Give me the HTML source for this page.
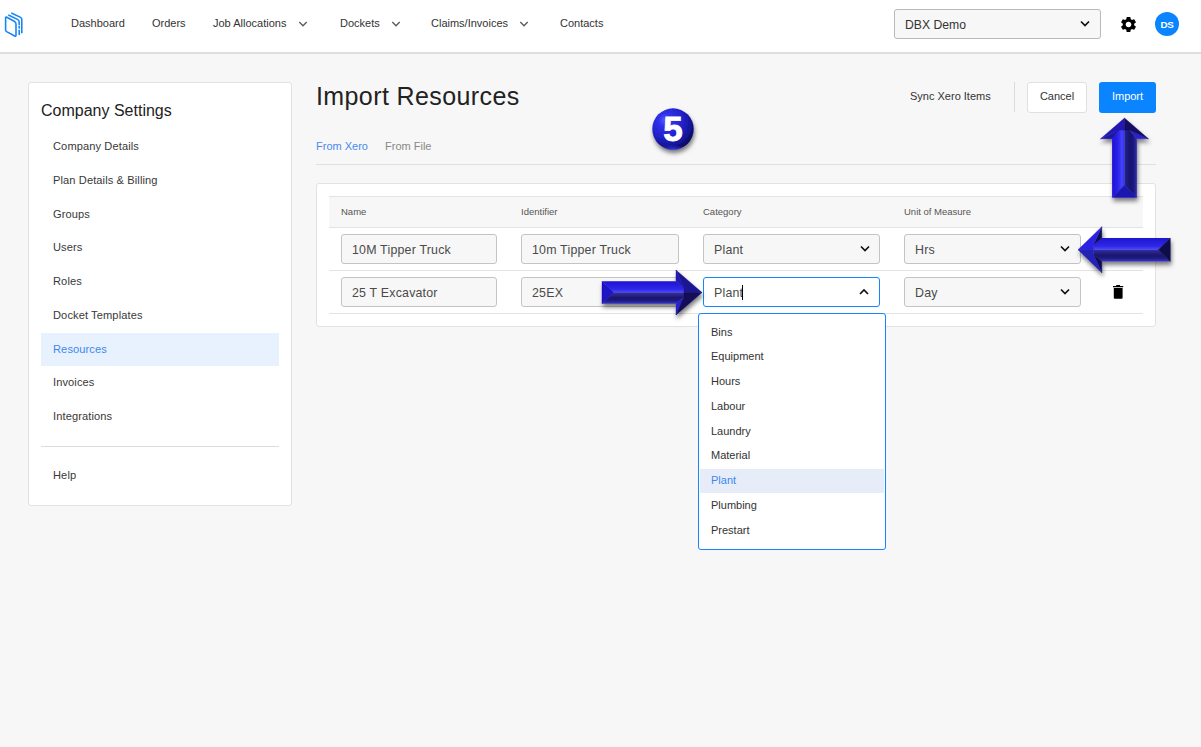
<!DOCTYPE html>
<html><head><meta charset="utf-8">
<style>
*{box-sizing:border-box;margin:0;padding:0}
html,body{width:1201px;height:747px;overflow:hidden}
body{background:#f7f7f7;font-family:"Liberation Sans",sans-serif;color:#333;position:relative}
.abs{position:absolute}
.hdr{position:absolute;left:0;top:0;width:1201px;height:54px;background:#fff;border-bottom:2px solid #dedede}
.nav{position:absolute;top:16px;font-size:11px;color:#333;white-space:nowrap;line-height:14px}
.chev{position:absolute}
.org{position:absolute;left:894px;top:9px;width:207px;height:30px;background:#f7f7f7;border:1px solid #b9b9b9;border-radius:3px}
.card{position:absolute;background:#fff;border:1px solid #e2e2e2;border-radius:3px}
.side{position:absolute;left:53px;font-size:11.1px;letter-spacing:0.1px;color:#383838;white-space:nowrap;line-height:14px}
.inp{position:absolute;height:30px;background:#f7f7f7;border:1px solid #c4c4c4;border-radius:3px;font-size:12.4px;letter-spacing:0.2px;color:#4a4a4a;line-height:29px;padding-top:1px;padding-left:10px;white-space:nowrap}
.th{position:absolute;top:206px;font-size:9.5px;color:#555;line-height:12px}
.dd{position:absolute;font-size:11px;color:#333;left:711px;line-height:14px}
</style></head><body>
<div class="hdr"></div>
<!-- logo -->
<svg class="abs" style="left:2px;top:10px" width="24" height="30" viewBox="0 0 24 30">
 <g fill="none" stroke="#1786f5" stroke-width="1.6" stroke-linejoin="round" stroke-linecap="round">
  <path d="M3.6 8 Q3.6 6.8 4.8 7.3 L12.2 11.2 Q14 12.2 14 14 L14 25.2 Q14 26.6 12.7 26 L4.6 21.6 Q3.6 21 3.6 20 Z"/>
  <path d="M6.9 5.2 L15.4 9.4 Q17.2 10.4 17.2 12 L17.2 14.4"/>
  <path d="M17.2 16.4 L17.2 18"/>
  <path d="M17.2 20.3 L17.2 24.4"/>
  <path d="M9.9 3.2 L18.6 7.4 Q19.8 8.1 19.8 9.6 L19.8 22.8"/>
 </g>
</svg>
<div class="nav" style="left:71px">Dashboard</div>
<div class="nav" style="left:152px">Orders</div>
<div class="nav" style="left:213px">Job Allocations</div>
<div class="nav" style="left:340px">Dockets</div>
<div class="nav" style="left:431px">Claims/Invoices</div>
<div class="nav" style="left:560px">Contacts</div>
<svg class="chev" style="left:298px;top:21px" width="10" height="7" viewBox="0 0 10 7"><path d="M1.3 1 L5 4.8 L8.7 1" fill="none" stroke="#5a5a5a" stroke-width="1.3"/></svg>
<svg class="chev" style="left:390.5px;top:21px" width="10" height="7" viewBox="0 0 10 7"><path d="M1.3 1 L5 4.8 L8.7 1" fill="none" stroke="#5a5a5a" stroke-width="1.3"/></svg>
<svg class="chev" style="left:518.5px;top:21.3px" width="10" height="7" viewBox="0 0 10 7"><path d="M1.3 1 L5 4.8 L8.7 1" fill="none" stroke="#5a5a5a" stroke-width="1.3"/></svg>

<div class="org"></div>
<div class="abs" style="left:905px;top:18px;font-size:12.2px;color:#333;line-height:15px">DBX Demo</div>
<svg class="abs" style="left:1080px;top:20px" width="10" height="8" viewBox="0 0 10 8"><path d="M1 1.5 L5 5.5 L9 1.5" fill="none" stroke="#111" stroke-width="1.7"/></svg>
<!-- gear -->
<svg class="abs" style="left:1118.6px;top:14.6px" width="19" height="19" viewBox="0 0 24 24"><path fill="#000" d="M19.14 12.94c.04-.3.06-.61.06-.94 0-.32-.02-.64-.07-.94l2.03-1.58a.49.49 0 0 0 .12-.61l-1.92-3.32a.488.488 0 0 0-.59-.22l-2.39.96c-.5-.38-1.03-.7-1.62-.94l-.36-2.54a.484.484 0 0 0-.48-.41h-3.84c-.24 0-.43.17-.47.41l-.36 2.54c-.59.24-1.13.57-1.62.94l-2.39-.96c-.22-.08-.47 0-.59.22L2.74 8.87c-.12.21-.08.47.12.61l2.03 1.58c-.05.3-.09.63-.09.94s.02.64.07.94l-2.03 1.58a.49.49 0 0 0-.12.61l1.92 3.32c.12.22.37.29.59.22l2.39-.96c.5.38 1.03.7 1.62.94l.36 2.54c.05.24.24.41.48.41h3.84c.24 0 .44-.17.47-.41l.36-2.54c.59-.24 1.13-.56 1.62-.94l2.39.96c.22.08.47 0 .59-.22l1.92-3.32c.12-.22.07-.47-.12-.61l-2.01-1.58zM12 15.6c-1.98 0-3.6-1.62-3.6-3.6s1.62-3.6 3.6-3.6 3.6 1.62 3.6 3.6-1.62 3.6-3.6 3.6z"/></svg>
<div class="abs" style="left:1155px;top:12px;width:24px;height:24px;border-radius:50%;background:#0a84ff;color:#fff;font-weight:bold;font-size:9.8px;letter-spacing:-0.2px;line-height:26px;text-align:center">DS</div>

<!-- sidebar -->
<div class="card" style="left:28px;top:82px;width:264px;height:424px"></div>
<div class="abs" style="left:41px;top:102px;font-size:16px;color:#222;line-height:18px">Company Settings</div>
<div class="abs" style="left:41px;top:333px;width:238px;height:33px;background:#e8f2fe"></div>
<div class="side" style="top:139px">Company Details</div>
<div class="side" style="top:173px">Plan Details &amp; Billing</div>
<div class="side" style="top:207px">Groups</div>
<div class="side" style="top:240px">Users</div>
<div class="side" style="top:274px">Roles</div>
<div class="side" style="top:308px">Docket Templates</div>
<div class="side" style="top:342px;color:#3d88f0">Resources</div>
<div class="side" style="top:375px">Invoices</div>
<div class="side" style="top:409px">Integrations</div>
<div class="abs" style="left:41px;top:446px;width:238px;height:1px;background:#dcdcdc"></div>
<div class="side" style="top:468px">Help</div>

<!-- main -->
<div class="abs" style="left:316px;top:83px;font-size:25px;letter-spacing:0.4px;color:#222;line-height:26px">Import Resources</div>
<div class="abs" style="left:316px;top:139px;font-size:11px;color:#4a8af0;line-height:14px">From Xero</div>
<div class="abs" style="left:385px;top:139px;font-size:11px;color:#888;line-height:14px">From File</div>
<div class="abs" style="left:316px;top:164px;width:840px;height:1px;background:#e0e0e0"></div>

<div class="abs" style="left:910px;top:89px;font-size:11px;color:#333;line-height:14px">Sync Xero Items</div>
<div class="abs" style="left:1014px;top:82px;width:1px;height:30px;background:#dcdcdc"></div>
<div class="abs" style="left:1027px;top:82px;width:60px;height:31px;background:#fff;border:1px solid #e0e0e0;border-radius:3px;font-size:11px;color:#333;line-height:27px;text-align:center">Cancel</div>
<div class="abs" style="left:1099px;top:82px;width:57px;height:31px;background:#0a84ff;border-radius:3px;font-size:11px;color:#fff;line-height:29px;text-align:center">Import</div>

<!-- table card -->
<div class="card" style="left:316px;top:183px;width:840px;height:144px"></div>
<div class="abs" style="left:329px;top:196px;width:814px;height:32px;background:#f7f7f7;border-top:1px solid #e3e3e3;border-bottom:1px solid #e3e3e3"></div>
<div class="abs" style="left:329px;top:270px;width:814px;height:1px;background:#e3e3e3"></div>
<div class="abs" style="left:329px;top:313px;width:814px;height:1px;background:#e3e3e3"></div>
<div class="th" style="left:341px">Name</div>
<div class="th" style="left:521px">Identifier</div>
<div class="th" style="left:703px">Category</div>
<div class="th" style="left:904px">Unit of Measure</div>

<div class="inp" style="left:341px;top:234px;width:156px">10M Tipper Truck</div>
<div class="inp" style="left:521px;top:234px;width:158px">10m Tipper Truck</div>
<div class="inp" style="left:703px;top:234px;width:177px">Plant</div>
<div class="inp" style="left:904px;top:234px;width:177px">Hrs</div>
<div class="inp" style="left:341px;top:277px;width:156px">25 T Excavator</div>
<div class="inp" style="left:521px;top:277px;width:158px">25EX</div>
<div class="inp" style="left:703px;top:277px;width:177px;background:#fff;border:1.4px solid #1486ff;line-height:27px;padding-top:2px">Plant</div>
<div class="abs" style="left:742px;top:285px;width:1px;height:15px;background:#000"></div>
<div class="inp" style="left:904px;top:277px;width:177px">Day</div>
<svg class="abs" style="left:860px;top:245px" width="10" height="8" viewBox="0 0 10 8"><path d="M1 1.5 L5 5.5 L9 1.5" fill="none" stroke="#111" stroke-width="1.7"/></svg>
<svg class="abs" style="left:859px;top:288px" width="10" height="8" viewBox="0 0 10 8"><path d="M1 6 L5 2 L9 6" fill="none" stroke="#111" stroke-width="1.7"/></svg>
<svg class="abs" style="left:1060px;top:245px" width="10" height="8" viewBox="0 0 10 8"><path d="M1 1.5 L5 5.5 L9 1.5" fill="none" stroke="#111" stroke-width="1.7"/></svg>
<svg class="abs" style="left:1060px;top:288px" width="10" height="8" viewBox="0 0 10 8"><path d="M1 1.5 L5 5.5 L9 1.5" fill="none" stroke="#111" stroke-width="1.7"/></svg>
<!-- trash -->
<svg class="abs" style="left:1112px;top:284px" width="12" height="16" viewBox="0 0 12 16"><path fill="#000" d="M1 1.9h10.2v1.4H1z M4.2 1h3.8v1.2H4.2z M1.8 4.1h8.8v9.6q0 1-1 1H2.8q-1 0-1-1z"/></svg>

<!-- dropdown -->
<div class="abs" style="left:698px;top:313px;width:188px;height:237px;background:#fff;border:1.3px solid #1486ff;border-radius:3px"></div>
<div class="abs" style="left:700px;top:469px;width:184px;height:24px;background:#e6edf9"></div>
<div class="dd" style="top:325px">Bins</div>
<div class="dd" style="top:349px">Equipment</div>
<div class="dd" style="top:374px">Hours</div>
<div class="dd" style="top:399px">Labour</div>
<div class="dd" style="top:424px">Laundry</div>
<div class="dd" style="top:448px">Material</div>
<div class="dd" style="top:473px;color:#3d88f0">Plant</div>
<div class="dd" style="top:498px">Plumbing</div>
<div class="dd" style="top:523px">Prestart</div>

<!--ARROWS--><svg class="abs" style="left:0;top:0" width="1201" height="747" viewBox="0 0 1201 747">
<defs>
<linearGradient id="gt" x1="0" y1="0" x2="0" y2="1"><stop offset="0" stop-color="#1e14d0"/><stop offset="0.7" stop-color="#3028e8"/><stop offset="1" stop-color="#4a48fc"/></linearGradient>
<linearGradient id="gb" x1="0" y1="0" x2="0" y2="1"><stop offset="0" stop-color="#3430a4"/><stop offset="0.45" stop-color="#1c1870"/><stop offset="0.7" stop-color="#1e1a78"/><stop offset="1" stop-color="#3a36c8"/></linearGradient>
<linearGradient id="gtv" x1="0" y1="0" x2="1" y2="0"><stop offset="0" stop-color="#2012d8"/><stop offset="0.5" stop-color="#2c24e8"/><stop offset="0.78" stop-color="#4442fc"/><stop offset="1" stop-color="#3632dc"/></linearGradient>
<linearGradient id="gbv" x1="0" y1="0" x2="1" y2="0"><stop offset="0" stop-color="#24209a"/><stop offset="0.45" stop-color="#16146a"/><stop offset="0.75" stop-color="#1c1a7c"/><stop offset="1" stop-color="#3632c0"/></linearGradient>
<filter id="sh" x="-20%" y="-20%" width="150%" height="160%"><feDropShadow dx="1" dy="3.5" stdDeviation="2" flood-color="#000" flood-opacity="0.5"/></filter>
<radialGradient id="ball" cx="0.36" cy="0.32" r="0.72" fx="0.3" fy="0.28"><stop offset="0" stop-color="#5a5aff"/><stop offset="0.22" stop-color="#3030ec"/><stop offset="0.55" stop-color="#2222cc"/><stop offset="0.8" stop-color="#16169c"/><stop offset="1" stop-color="#08085a"/></radialGradient><radialGradient id="ballr" cx="0.5" cy="1.0" r="0.5"><stop offset="0" stop-color="#4a48ff" stop-opacity="0.9"/><stop offset="0.5" stop-color="#3a38e8" stop-opacity="0.5"/><stop offset="1" stop-color="#3a38e0" stop-opacity="0"/></radialGradient>
</defs>
<g filter="url(#sh)"><polygon points="602,281.2 676,281.2 683.91,287.98 683.91,292.5 613.3,292.5" fill="url(#gt)"/>
<polygon points="613.3,292.5 683.91,292.5 683.91,297.02 676,303.8 602,303.8" fill="url(#gb)"/>
<polygon points="602.00,281.20 613.30,292.50 602.00,303.80" fill="#1c12c4" stroke="#1c12c4" stroke-width="0.35" stroke-linejoin="round"/>
<polygon points="676.00,281.20 676.00,270.00 683.91,287.98" fill="#1d1ab4" stroke="#1d1ab4" stroke-width="0.35" stroke-linejoin="round"/>
<polygon points="676.00,270.00 702.00,292.50 683.91,292.50 683.91,287.98" fill="#1b1894" stroke="#1b1894" stroke-width="0.35" stroke-linejoin="round"/>
<polygon points="683.91,297.02 676.00,315.00 676.00,303.80" fill="#2820d0" stroke="#2820d0" stroke-width="0.35" stroke-linejoin="round"/>
<polygon points="676.00,315.00 702.00,292.50 683.91,292.50 683.91,297.02" fill="#120e58" stroke="#120e58" stroke-width="0.35" stroke-linejoin="round"/></g>
<g filter="url(#sh)"><polygon points="1112.1,197.6 1112.1,138.8 1119.54,130.12 1124.5,130.12 1124.5,185.2" fill="url(#gtv)"/>
<polygon points="1124.5,185.2 1124.5,130.12 1129.46,130.12 1136.9,138.8 1136.9,197.6" fill="url(#gbv)"/>
<polygon points="1112.10,197.60 1124.50,185.20 1136.90,197.60" fill="#1c16b0" stroke="#1c16b0" stroke-width="0.35" stroke-linejoin="round"/>
<polygon points="1112.10,138.80 1100.60,138.80 1119.54,130.12" fill="#1a14a4" stroke="#1a14a4" stroke-width="0.35" stroke-linejoin="round"/>
<polygon points="1100.60,138.80 1124.50,118.00 1124.50,130.12 1119.54,130.12" fill="#2018b4" stroke="#2018b4" stroke-width="0.35" stroke-linejoin="round"/>
<polygon points="1129.46,130.12 1148.40,138.80 1136.90,138.80" fill="#2a22c8" stroke="#2a22c8" stroke-width="0.35" stroke-linejoin="round"/>
<polygon points="1148.40,138.80 1124.50,118.00 1124.50,130.12 1129.46,130.12" fill="#120e62" stroke="#120e62" stroke-width="0.35" stroke-linejoin="round"/></g>
<g filter="url(#sh)"><polygon points="1170.3,237.89999999999998 1101.8,237.89999999999998 1093.54,244.98 1093.54,249.7 1158.5,249.7" fill="url(#gt)"/>
<polygon points="1158.5,249.7 1093.54,249.7 1093.54,254.42 1101.8,261.5 1170.3,261.5" fill="url(#gb)"/>
<polygon points="1170.30,237.90 1158.50,249.70 1170.30,261.50" fill="#0c0a48" stroke="#0c0a48" stroke-width="0.35" stroke-linejoin="round"/>
<polygon points="1101.80,237.90 1101.80,226.70 1093.54,244.98" fill="#0c0a50" stroke="#0c0a50" stroke-width="0.35" stroke-linejoin="round"/>
<polygon points="1101.80,226.70 1078.00,249.70 1093.54,249.70 1093.54,244.98" fill="#2a22e0" stroke="#2a22e0" stroke-width="0.35" stroke-linejoin="round"/>
<polygon points="1093.54,254.42 1101.80,272.70 1101.80,261.50" fill="#0e0c56" stroke="#0e0c56" stroke-width="0.35" stroke-linejoin="round"/>
<polygon points="1101.80,272.70 1078.00,249.70 1093.54,249.70 1093.54,254.42" fill="#2420b4" stroke="#2420b4" stroke-width="0.35" stroke-linejoin="round"/></g>
<g filter="url(#sh)"><circle cx="673" cy="129" r="20.7" fill="url(#ball)"/></g>
<ellipse cx="673" cy="145" rx="14" ry="5" fill="url(#ballr)"/>
<text x="673" y="141.2" text-anchor="middle" font-family="Liberation Sans" font-weight="bold" font-size="35" fill="#fff" stroke="#fff" stroke-width="0.9">5</text>
</svg><!--/ARROWS-->
</body></html>
